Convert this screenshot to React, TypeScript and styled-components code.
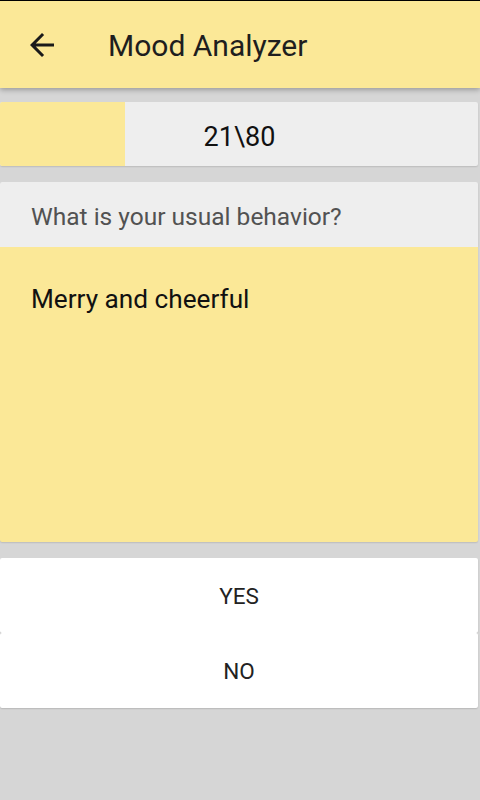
import React from "react";
import styled, { createGlobalStyle } from "styled-components";

const yellow = "#fbe897";
const pageGray = "#d6d6d6";
const cardGray = "#eeeeee";

const GlobalStyle = createGlobalStyle`
  html, body {
    margin: 0;
    padding: 0;
    background: ${pageGray};
    font-family: Roboto, "Liberation Sans", sans-serif;
  }
  * { box-sizing: border-box; }
`;

const Screen = styled.div`
  width: 480px;
  height: 800px;
  background: ${pageGray};
  display: flex;
  flex-direction: column;
  overflow: hidden;
`;

const Toolbar = styled.header`
  position: relative;
  z-index: 1;
  height: 88px;
  border-top: 1px solid #000;
  background: ${yellow};
  display: flex;
  align-items: center;
  padding-left: 24px;
  box-shadow: 0 2px 5px rgba(0, 0, 0, 0.28);
`;

const BackButton = styled.button`
  width: 36px;
  height: 36px;
  padding: 0;
  border: 0;
  background: transparent;
  display: flex;
  align-items: center;
  justify-content: center;
  margin-right: 48px;
`;

const Title = styled.h1`
  margin: 0;
  font-size: 30px;
  font-weight: 400;
  color: #1e1e1e;
  padding-top: 1px;
`;

const Body = styled.main`
  display: flex;
  flex-direction: column;
  padding: 14px 2px 0 0;
`;

const Card = styled.div<{ $bg: string }>`
  background: ${(p) => p.$bg};
  border-radius: 2px;
  box-shadow: 0 1px 1.5px rgba(0, 0, 0, 0.12);
`;

const ProgressCard = styled(Card)`
  position: relative;
  height: 64px;
  display: flex;
  align-items: center;
  justify-content: center;
  overflow: hidden;
`;

const ProgressFill = styled.div`
  position: absolute;
  left: 0;
  top: 0;
  bottom: 0;
  background: ${yellow};
`;

const ProgressLabel = styled.span`
  position: relative;
  font-size: 27px;
  color: #111;
  padding-top: 5px;
  padding-left: 1px;
`;

const QuestionCard = styled(Card)`
  margin-top: 16px;
  height: 65px;
  display: flex;
  align-items: center;
  padding: 4px 0 0 31px;
  font-size: 24.5px;
  color: #525252;
  border-radius: 2px 2px 0 0;
`;

const AnswerCard = styled(Card)`
  height: 295px;
  padding: 37px 0 0 31px;
  font-size: 26.2px;
  color: #111;
  border-radius: 0 0 2px 2px;
`;

const Options = styled.div`
  margin-top: 16px;
  display: flex;
  flex-direction: column;
`;

const OptionButton = styled.button`
  height: 75px;
  border: 0;
  border-radius: 2px;
  background: #fff;
  box-shadow: 0 1px 1.5px rgba(0, 0, 0, 0.14);
  font-family: Roboto, "Liberation Sans", sans-serif;
  font-size: 22.5px;
  color: #222;
  text-transform: uppercase;
  display: flex;
  align-items: center;
  justify-content: center;
  padding: 0;
`;

const progress = { done: 21, total: 80 };

export default function App() {
  const fillWidth = 125;
  return (
    <>
      <GlobalStyle />
      <Screen>
        <Toolbar>
          <BackButton aria-label="Back">
            <svg width="36" height="36" viewBox="0 0 24 24">
              <path
                d="M20 11H7.830l5.59-5.59L12 4l-8 8 8 8 1.41-1.41L7.83 13H20v-2z"
                fill="#1a1a1a"
              />
            </svg>
          </BackButton>
          <Title>Mood Analyzer</Title>
        </Toolbar>
        <Body>
          <ProgressCard $bg={cardGray}>
            <ProgressFill style={{ width: fillWidth }} />
            <ProgressLabel>
              {progress.done}\{progress.total}
            </ProgressLabel>
          </ProgressCard>
          <QuestionCard $bg={cardGray}>What is your usual behavior?</QuestionCard>
          <AnswerCard $bg={yellow}>Merry and cheerful</AnswerCard>
          <Options>
            <OptionButton>Yes</OptionButton>
            <OptionButton>No</OptionButton>
          </Options>
        </Body>
      </Screen>
    </>
  );
}
